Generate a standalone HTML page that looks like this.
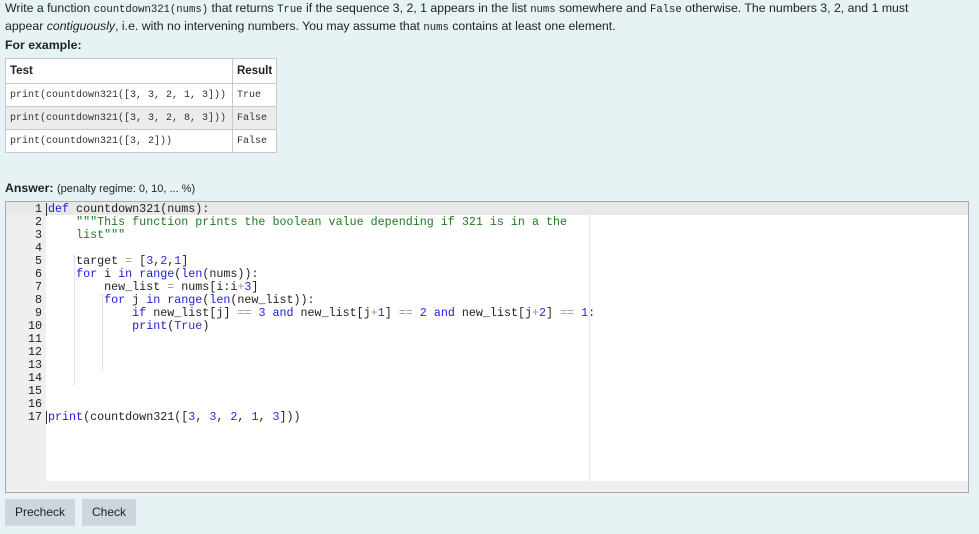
<!DOCTYPE html>
<html><head><style>
body{margin:0;background:#e7f2f5;font-family:"Liberation Sans",sans-serif;font-size:12.3px;color:#1d2125;width:979px;height:534px;overflow:hidden;position:relative}
.a{position:absolute}
code{font-family:"Liberation Mono",monospace;font-size:10.6px}
table{border-collapse:collapse;position:absolute;left:5px;top:58px}
td{border:1px solid #c8c8c8;height:22px;padding:0 4px;font-family:"Liberation Mono",monospace;font-size:10px;color:#333;background:#fff}
tr.h td{font-family:"Liberation Sans",sans-serif;font-weight:bold;font-size:11.5px;height:24px;color:#1d2125}
tr.g td{background:#ececec}
.ed{left:5px;top:201px;width:962px;height:290px;border:1px solid #aaa;background:#fff}
.gut{left:0;top:0;width:40px;height:290px;background:#efefef}
.ln{font-family:"Liberation Mono",monospace;font-size:11.7px;line-height:13px;white-space:pre}
.k{color:#1c1cd8}.s{color:#227a22}.n{color:#2a2ad8}.o{color:#999}
.btn{background:#ced5dc;font-size:12px;height:27px;line-height:27px;text-align:center;top:499px}
</style></head><body>
<div class="a" style="left:5px;top:0;line-height:16px;width:912px">Write a function <code>countdown321(nums)</code> that returns <code>True</code> if the sequence 3, 2, 1 appears in the list <code>nums</code> somewhere and <code>False</code> otherwise. The numbers 3, 2, and 1 must appear <i>contiguously</i>, i.e. with no intervening numbers. You may assume that <code>nums</code> contains at least one element.</div>
<div class="a" style="left:5px;top:38px;font-weight:bold">For example:</div>
<table>
<tr class="h"><td style="width:218px">Test</td><td style="width:34px">Result</td></tr>
<tr><td>print(countdown321([3, 3, 2, 1, 3]))</td><td>True</td></tr>
<tr class="g"><td>print(countdown321([3, 3, 2, 8, 3]))</td><td>False</td></tr>
<tr><td>print(countdown321([3, 2]))</td><td>False</td></tr>
</table>
<div class="a" style="left:5px;top:181px"><b>Answer:</b> <span style="font-size:11px">(penalty regime: 0, 10, ... %)</span></div>
<div class="a ed">
<div class="a gut"></div>
<div class="a" style="left:0;top:0;width:962px;height:13px;background:#e8e8e8"></div>
<div class="a" style="left:0;top:279px;width:962px;height:11px;background:#efefef"></div>
<div class="a" style="left:583px;top:0;width:1px;height:279px;background:#e4e4e4"></div>
<div class="a" style="left:40px;top:1px;width:1px;height:13px;background:#333"></div>
<div class="a" style="left:68px;top:53px;width:0;height:130px;border-left:1px dotted #ccc"></div>
<div class="a" style="left:96px;top:92px;width:0;height:78px;border-left:1px dotted #ccc"></div>
<div class="a ln" style="left:0;top:1px;width:36px;text-align:right;color:#222">1
2
3
4
5
6
7
8
9
10
11
12
13
14
15
16
17</div>
<div class="a ln" style="left:42px;top:1px;color:#222"><span class="k">def</span> countdown321(nums):
    <span class="s">"""This function prints the boolean value depending if 321 is in a the
    list"""</span>

    target <span class="o">=</span> [<span class="n">3</span>,<span class="n">2</span>,<span class="n">1</span>]
    <span class="k">for</span> i <span class="k">in</span> <span class="k">range</span>(<span class="k">len</span>(nums)):
        new_list <span class="o">=</span> nums[i:i<span class="o">+</span><span class="n">3</span>]
        <span class="k">for</span> j <span class="k">in</span> <span class="k">range</span>(<span class="k">len</span>(new_list)):
            <span class="k">if</span> new_list[j] <span class="o">==</span> <span class="n">3</span> <span class="k">and</span> new_list[j<span class="o">+</span><span class="n">1</span>] <span class="o">==</span> <span class="n">2</span> <span class="k">and</span> new_list[j<span class="o">+</span><span class="n">2</span>] <span class="o">==</span> <span class="n">1</span>:
            <span class="k">print</span>(<span class="n">True</span>)






<span class="k">print</span>(countdown321([<span class="n">3</span>, <span class="n">3</span>, <span class="n">2</span>, <span class="n">1</span>, <span class="n">3</span>]))</div>
<div class="a" style="left:40px;top:209px;width:1px;height:13px;background:#333"></div>
</div>
<div class="a btn" style="left:5px;width:70px">Precheck</div>
<div class="a btn" style="left:82px;width:54px">Check</div>
</body></html>
